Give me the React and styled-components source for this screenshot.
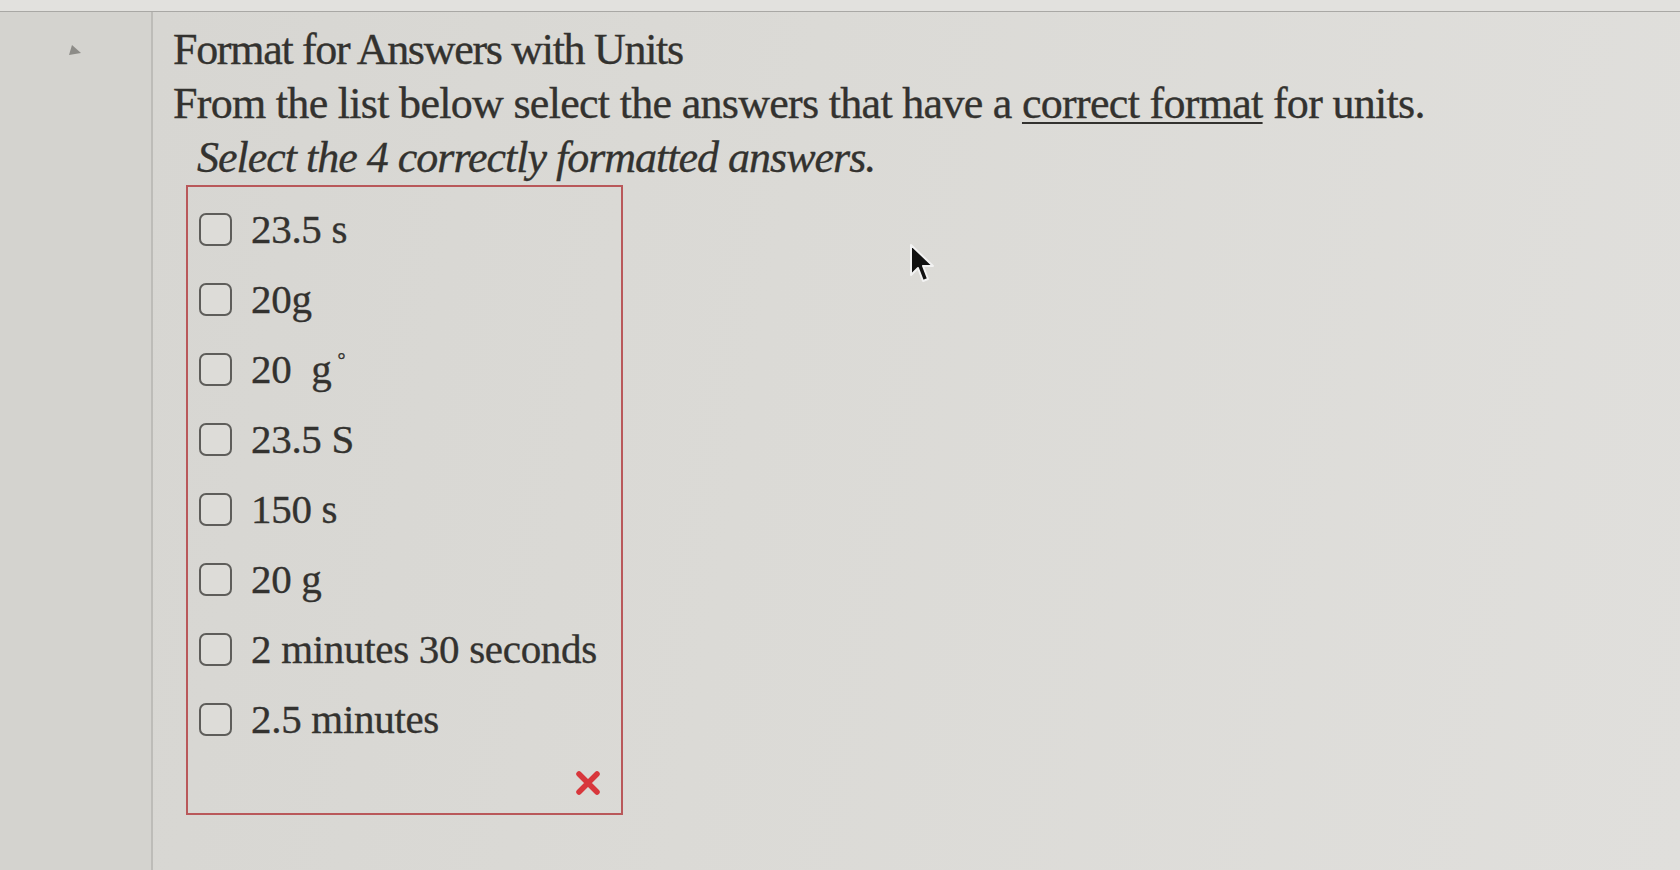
import React from "react";
import styled, { createGlobalStyle } from "styled-components";

const options = [
  { id: 1, label: "23.5 s" },
  { id: 2, label: "20g" },
  { id: 3, label: "20\u00a0\u00a0g", mark: "°" },
  { id: 4, label: "23.5 S" },
  { id: 5, label: "150 s" },
  { id: 6, label: "20 g" },
  { id: 7, label: "2 minutes 30 seconds" },
  { id: 8, label: "2.5 minutes" },
];

const Global = createGlobalStyle`
  html, body {
    margin: 0;
    padding: 0;
    background: #d9d8d4;
  }
  * { box-sizing: border-box; }
`;

const Page = styled.div`
  width: 1680px;
  height: 870px;
  display: flex;
  flex-direction: column;
  overflow: hidden;
  position: relative;
  background: linear-gradient(100deg, #d6d5d1 0%, #dbdad6 45%, #e0dfdc 100%);
  font-family: "Liberation Serif", "DejaVu Serif", serif;
  color: #33322f;
  -webkit-text-stroke: 0.35px #33322f;
`;

const TopBar = styled.div`
  height: 12px;
  flex-shrink: 0;
  background: #e2e1de;
  border-bottom: 1px solid #a9a8a5;
`;

const Body = styled.div`
  flex: 1;
  display: flex;
`;

const Rail = styled.div`
  width: 153px;
  flex-shrink: 0;
  border-right: 2px solid #bdbcb8;
  background: #d4d3cf;
  padding: 30px 0 0 68px;
`;

const Main = styled.div`
  flex: 1;
  padding: 11px 0 0 20px;
`;

const Line = styled.div`
  font-size: 44px;
  line-height: 54px;
  letter-spacing: ${(p) => p.$spacing || "-1.3px"};
  white-space: nowrap;
`;

const Instruction = styled(Line)`
  font-style: italic;
  padding-left: 24px;
  letter-spacing: -1px;
`;

const Under = styled.span`
  text-decoration: underline;
  text-decoration-thickness: 2px;
  text-underline-offset: 4px;
`;

const Box = styled.div`
  margin-left: 13px;
  width: 437px;
  height: 630px;
  border: 2px solid #b9585a;
  padding: 7px 20px 0 11px;
  display: flex;
  flex-direction: column;
`;

const Row = styled.label`
  height: 70px;
  display: flex;
  align-items: center;
  gap: 19px;
  font-size: 41px;
  letter-spacing: -0.3px;
  white-space: nowrap;
`;

const Check = styled.span`
  width: 33px;
  height: 33px;
  flex-shrink: 0;
  border: 2.5px solid #5e5d5a;
  border-radius: 7px;
  background: #dddcd8;
`;

const Deg = styled.span`
  font-size: 20px;
  vertical-align: 16px;
  margin-left: 6px;
`;

const Footer = styled.div`
  flex: 1;
  display: flex;
  justify-content: flex-end;
  align-items: center;
  padding-bottom: 2px;
`;

const Cursor = styled.svg`
  position: absolute;
  left: 909px;
  top: 243px;
`;

function Caret() {
  return (
    <svg width="14" height="12" viewBox="0 0 14 12">
      <path d="M1 11 L4 1 L13 9 Z" fill="#8d8c88" />
    </svg>
  );
}

function CrossMark() {
  return (
    <svg width="26" height="24" viewBox="0 0 26 24">
      <path
        d="M4 3 L22 21 M22 3 L4 21"
        stroke="#d8373c"
        strokeWidth="5.5"
        strokeLinecap="round"
      />
    </svg>
  );
}

export default function App() {
  return (
    <Page>
      <Global />
      <TopBar />
      <Body>
        <Rail>
          <Caret />
        </Rail>
        <Main>
          <Line>Format for Answers with Units</Line>
          <Line $spacing="-0.7px">
            From the list below select the answers that have a{" "}
            <Under>correct format</Under> for units.
          </Line>
          <Instruction>Select the 4 correctly formatted answers.</Instruction>
          <Box>
            {options.map((o) => (
              <Row key={o.id}>
                <Check />
                <span>
                  {o.label}
                  {o.mark && <Deg>{o.mark}</Deg>}
                </span>
              </Row>
            ))}
            <Footer>
              <CrossMark />
            </Footer>
          </Box>
        </Main>
      </Body>
      <Cursor width="30" height="42" viewBox="0 0 30 42">
        <path
          d="M2 2 L2 32 L9 25 L14 38 L19 36 L14 23 L24 23 Z"
          fill="#111"
          stroke="#f2f2f2"
          strokeWidth="2"
          strokeLinejoin="round"
        />
      </Cursor>
    </Page>
  );
}
